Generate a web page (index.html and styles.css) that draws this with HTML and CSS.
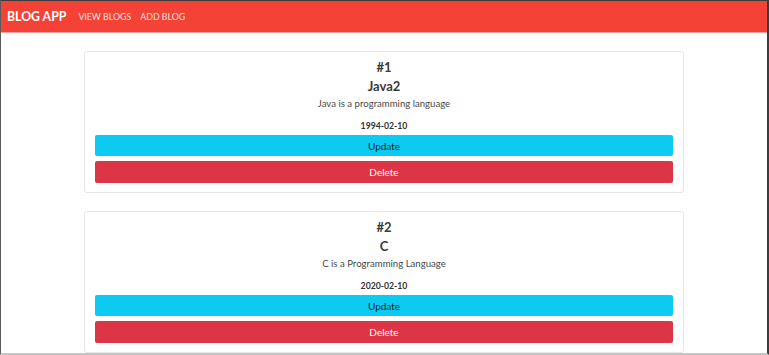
FILE: index.html
```html
<!DOCTYPE html>
<html lang="en">
    <head>
        <title>Blog App</title>
        <meta charset="utf-8" />
        <meta name="viewport" content="width=device-width, initial-scale=1">
        <link rel="stylesheet" href="styles.css">
    </head>

    <body>
        <div id="window">
            <nav class="navbar">
                <span class="brand">BLOG APP</span>
                <a class="nav-link" href="#">VIEW BLOGS</a>
                <a class="nav-link" href="#">ADD BLOG</a>
            </nav>

            <main id="content">
                <div class="card">
                    <h5 class="blog-id">#1</h5>
                    <h5 class="blog-title">Java2</h5>
                    <p class="blog-text">Java is a programming language</p>
                    <p class="blog-date">1994-02-10</p>
                    <button class="btn btn-info">Update</button>
                    <button class="btn btn-danger">Delete</button>
                </div>

                <div class="card">
                    <h5 class="blog-id">#2</h5>
                    <h5 class="blog-title">C</h5>
                    <p class="blog-text">C is a Programming Language</p>
                    <p class="blog-date">2020-02-10</p>
                    <button class="btn btn-info">Update</button>
                    <button class="btn btn-danger">Delete</button>
                </div>
            </main>
        </div>
    </body>
</html>
```

FILE: styles.css
```css
html, body {
    margin: 0;
    padding: 0;
}

body {
    font-family: Lato, "Open Sans", sans-serif;
    color: #333333;
    background: #ffffff;
}

#window {
    height: 355px;
    box-sizing: border-box;
    border-top: 1px solid #3c3c3c;
    border-left: 1px solid #5a5a5a;
    border-right: 2px solid #3c3c3c;
    border-bottom: 2px solid #c4c4c4;
    overflow: hidden;
}

.navbar {
    display: flex;
    align-items: center;
    height: 31px;
    padding: 0 6px;
    background-color: #f44336;
    border-bottom: 1px solid #f8a49d;
}

.brand {
    color: #ffffff;
    font-size: 12.3px;
    font-weight: bold;
    margin-right: 12px;
}

.nav-link {
    color: rgba(255, 255, 255, 0.88);
    font-size: 8.8px;
    text-decoration: none;
    margin-right: 9px;
}

#content {
    padding-top: 18px;
}

.card {
    width: 600px;
    box-sizing: border-box;
    margin: 0 auto 18px auto;
    padding: 6px 10px 9px 10px;
    border: 1px solid #e6e6e6;
    border-radius: 3px;
    text-align: center;
    display: flex;
    flex-direction: column;
}

.blog-id, .blog-title {
    margin: 0;
    font-size: 13px;
    font-weight: bold;
    line-height: 19px;
    color: #3a3a3a;
}

.blog-text {
    margin: 0;
    font-size: 9.6px;
    line-height: 16px;
    color: #4a4a4a;
}

.blog-date {
    margin: 6px 0 1px 0;
    font-size: 8.7px;
    font-weight: bold;
    line-height: 16px;
    color: #333333;
}

.btn {
    font-family: inherit;
    font-size: 10px;
    height: 21px;
    border: none;
    border-radius: 2px;
    padding: 0;
    cursor: pointer;
}

.btn + .btn {
    margin-top: 5px;
    height: 22px;
}

.btn-info {
    background-color: #0dcaf0;
    color: #1a1a1a;
}

.btn-danger {
    background-color: #dc3545;
    color: #ffffff;
}
```
